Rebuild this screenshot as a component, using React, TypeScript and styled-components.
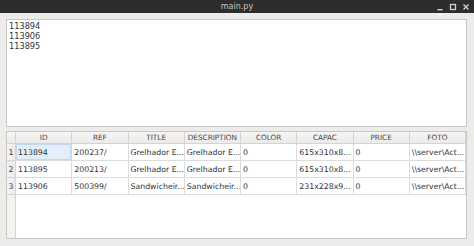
import { FC, Fragment } from 'react';
import styled, { createGlobalStyle } from 'styled-components';

const GlobalStyle = createGlobalStyle`
  *, *::before, *::after {
    box-sizing: border-box;
  }
  html, body {
    margin: 0;
    padding: 0;
    background: #edeceb;
    font-family: 'DejaVu Sans', 'Liberation Sans', sans-serif;
  }
`;

const Window = styled.div`
  width: 474px;
  height: 246px;
  display: flex;
  flex-direction: column;
  background: #edeceb;
  overflow: hidden;
`;

const TitleBar = styled.div`
  flex-shrink: 0;
  height: 13px;
  background: #2d2d2d;
  position: relative;
  display: flex;
  align-items: center;
  justify-content: center;
  color: #c8c8c8;
  font-size: 8px;
`;

const WinControls = styled.div`
  position: absolute;
  right: 4px;
  top: 0;
  height: 13px;
  display: flex;
  align-items: center;
  gap: 5px;
`;

const Body = styled.div`
  flex: 1;
  min-height: 0;
  display: flex;
  flex-direction: column;
  gap: 4px;
  padding: 6px 7px 7px 6px;
`;

const TextEdit = styled.div`
  flex-shrink: 0;
  height: 108px;
  background: #fff;
  border: 1px solid #c9c7c4;
  padding: 2px 2px;
  font-size: 8.2px;
  line-height: 9.8px;
  color: #2e3436;
`;

const Table = styled.div`
  flex: 1;
  background: #fff;
  border: 1px solid #c9c7c4;
  display: grid;
  grid-template-columns: 9px repeat(8, 1fr);
  grid-template-rows: 12px repeat(3, 17px) 1fr;
  font-size: 7.8px;
  color: #2e3436;
`;

const HeaderCell = styled.div`
  background: linear-gradient(#f6f5f4, #ecebe9);
  border-right: 1px solid #d6d4d1;
  border-bottom: 1px solid #d6d4d1;
  display: flex;
  align-items: center;
  justify-content: center;
  color: #4a4a4a;
  font-size: 7.3px;
`;

const RowHeader = styled.div<{ filler?: boolean }>`
  background: ${(p) => (p.filler ? '#f4f3f2' : 'linear-gradient(90deg, #f6f5f4, #ecebe9)')};
  border-right: 1px solid #d6d4d1;
  border-bottom: ${(p) => (p.filler ? 'none' : '1px solid #d6d4d1')};
  display: flex;
  align-items: center;
  justify-content: center;
  color: #3a3a3a;
`;

const Cell = styled.div<{ selected?: boolean }>`
  border-right: 1px solid #dcdcdc;
  border-bottom: 1px solid #dcdcdc;
  background: ${(p) => (p.selected ? '#e4eef8' : '#fff')};
  box-shadow: ${(p) => (p.selected ? 'inset 0 0 0 1px #c5d9ee' : 'none')};
  display: flex;
  align-items: center;
  padding-left: 2px;
  white-space: nowrap;
  overflow: hidden;
`;

const Filler = styled.div`
  grid-column: 2 / span 8;
`;

const columns = ['ID', 'REF', 'TITLE', 'DESCRIPTION', 'COLOR', 'CAPAC', 'PRICE', 'FOTO'];

const rows = [
  ['113894', '200237/', 'Grelhador E...', 'Grelhador E...', '0', '615x310x8...', '0', '\\\\server\\Act...'],
  ['113895', '200213/', 'Grelhador E...', 'Grelhador E...', '0', '615x310x8...', '0', '\\\\server\\Act...'],
  ['113906', '500399/', 'Sandwicheir...', 'Sandwicheir...', '0', '231x228x9...', '0', '\\\\server\\Act...'],
];

const ids = ['113894', '113906', '113895'];

const App: FC = () => (
  <>
    <GlobalStyle />
    <Window>
      <TitleBar>
        main.py
        <WinControls>
          <svg width="8" height="8" viewBox="0 0 8 8">
            <rect x="1.5" y="6" width="5" height="1.4" fill="#d0d0d0" />
          </svg>
          <svg width="8" height="8" viewBox="0 0 8 8">
            <rect x="1.5" y="1.5" width="5" height="5" fill="none" stroke="#d0d0d0" strokeWidth="1.3" />
          </svg>
          <svg width="8" height="8" viewBox="0 0 8 8">
            <path d="M1.5 1.5 L6.5 6.5 M6.5 1.5 L1.5 6.5" stroke="#d0d0d0" strokeWidth="1.4" />
          </svg>
        </WinControls>
      </TitleBar>
      <Body>
        <TextEdit>
          {ids.map((id) => (
            <div key={id}>{id}</div>
          ))}
        </TextEdit>
        <Table>
          <HeaderCell />
          {columns.map((c) => (
            <HeaderCell key={c}>{c}</HeaderCell>
          ))}
          {rows.map((r, i) => (
            <Fragment key={i}>
              <RowHeader>{i + 1}</RowHeader>
              {r.map((v, j) => (
                <Cell key={j} selected={i === 0 && j === 0}>
                  {v}
                </Cell>
              ))}
            </Fragment>
          ))}
          <RowHeader filler />
          <Filler />
        </Table>
      </Body>
    </Window>
  </>
);

export default App;
